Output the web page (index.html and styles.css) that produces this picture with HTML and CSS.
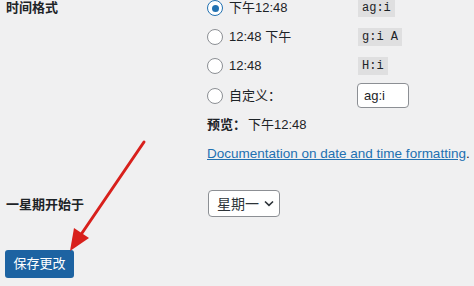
FILE: index.html
```html
<!DOCTYPE html>
<html lang="zh-CN">
<head>
<meta charset="utf-8">
<link rel="stylesheet" href="styles.css">
</head>
<body>
<div class="page">
  <div class="row row-time">
    <div class="label">时间格式</div>
    <div class="field">
      <div class="opt">
        <span class="radio checked"></span>
        <span class="opt-text">下午12:48</span>
        <code>ag:i</code>
      </div>
      <div class="opt">
        <span class="radio"></span>
        <span class="opt-text">12:48 下午</span>
        <code>g:i A</code>
      </div>
      <div class="opt">
        <span class="radio"></span>
        <span class="opt-text">12:48</span>
        <code>H:i</code>
      </div>
      <div class="opt">
        <span class="radio"></span>
        <span class="opt-text">自定义：</span>
        <span class="input">ag:i</span>
      </div>
      <div class="preview"><strong>预览：</strong><span class="preview-val">下午12:48</span></div>
      <div class="doc"><a href="#">Documentation on date and time formatting</a>.</div>
    </div>
  </div>
  <div class="row row-week">
    <div class="label">一星期开始于</div>
    <div class="field">
      <div class="select">星期一
        <svg class="chev" width="10" height="7" viewBox="0 0 10 7"><path d="M1 1.5 L5 5.3 L9 1.5" fill="none" stroke="#2c3338" stroke-width="1.6"/></svg>
      </div>
    </div>
  </div>
  <div class="submit"><span class="button">保存更改</span></div>
  <svg class="arrow" width="474" height="286" viewBox="0 0 474 286">
    <line x1="144" y1="142" x2="80" y2="236" stroke="#d8201c" stroke-width="3" stroke-linecap="round"/>
    <polygon points="70,251 74,228 89,238" fill="#d8201c"/>
  </svg>
</div>
</body>
</html>
```
FILE: styles.css
```css
html, body {
  margin: 0;
  padding: 0;
  background: #f0f0f1;
}
body {
  font-family: "Liberation Sans", "Noto Sans CJK SC", sans-serif;
  font-size: 13px;
  color: #1d2327;
}
.page {
  position: relative;
  width: 474px;
  height: 286px;
  overflow: hidden;
}
.row {
  display: grid;
  grid-template-columns: 207px 1fr;
}
.label {
  padding-left: 6px;
  font-weight: bold;
  font-size: 13px;
  line-height: 16px;
}
.opt {
  display: flex;
  align-items: center;
  height: 16px;
  margin-bottom: 13.2px;
}
.radio {
  flex: none;
  width: 14px;
  height: 14px;
  border: 1px solid #8c8f94;
  border-radius: 50%;
  background: #fff;
  position: relative;
  box-sizing: content-box;
  margin-right: 6px;
}
.radio.checked {
  border-color: #2271b1;
}
.radio.checked::after {
  content: "";
  position: absolute;
  left: 3.5px;
  top: 3.5px;
  width: 7px;
  height: 7px;
  border-radius: 50%;
  background: #2271b1;
}
.opt-text {
  flex: none;
  width: 129px;
  line-height: 16px;
}
code {
  font-family: "Liberation Mono", "DejaVu Sans Mono", monospace;
  font-size: 12px;
  background: #dfdfe0;
  padding: 1px 4px;
  line-height: 16px;
}
.input {
  flex: none;
  margin-left: -1px;
  width: 52px;
  height: 25px;
  box-sizing: border-box;
  border: 1px solid #8c8f94;
  border-radius: 4px;
  background: #fff;
  padding: 0 6px;
  line-height: 23px;
}
.preview {
  margin-top: 5px;
  line-height: 16px;
}
.preview strong {
  font-weight: bold;
}
.preview-val {
  margin-left: 2px;
}
.doc {
  margin-top: 13px;
  line-height: 16px;
  font-size: 13.5px;
}
.doc a {
  color: #2271b1;
  text-decoration: underline;
}
.row-week {
  margin-top: 28px;
  align-items: center;
}
.row-week .label {
  padding-top: 3px;
}
.select {
  display: inline-flex;
  align-items: center;
  gap: 5px;
  margin-left: 1px;
  height: 27px;
  box-sizing: border-box;
  border: 1px solid #8c8f94;
  border-radius: 4px;
  background: #fff;
  padding: 0 5px 0 8px;
  color: #2c3338;
  font-size: 14px;
}
.submit {
  margin-top: 33px;
  padding-left: 5px;
}
.button {
  display: inline-block;
  width: 69px;
  height: 28px;
  box-sizing: border-box;
  background: #1d63a2;
  color: #fff;
  border-radius: 3px;
  text-align: center;
  line-height: 28px;
}
.arrow {
  position: absolute;
  left: 0;
  top: 0;
  pointer-events: none;
}
```
